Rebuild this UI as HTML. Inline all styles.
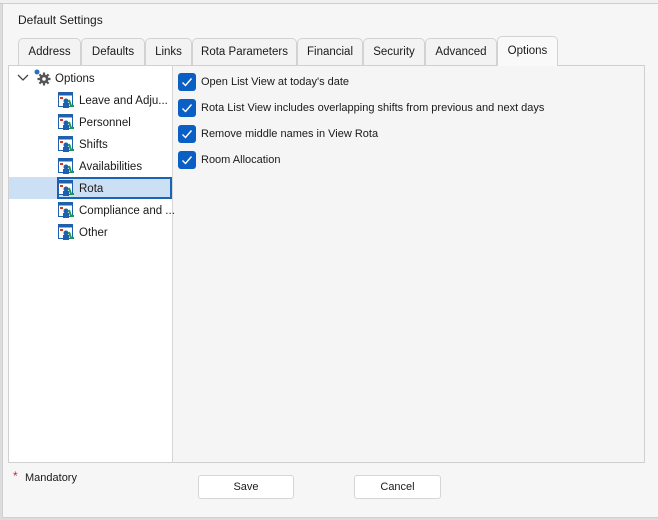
<!DOCTYPE html>
<html><head><meta charset="utf-8"><style>
*{box-sizing:border-box;margin:0;padding:0}
body{width:658px;height:520px;background:#dcdcdc;font-family:"Liberation Sans",sans-serif;font-size:11px;color:#1a1a1a;position:relative;overflow:hidden}
.topbar{position:absolute;left:0;top:0;width:658px;height:4px;background:#f0f0f0;border-bottom:1px solid #c8c8c8}
.dlg{position:absolute;left:2px;top:3px;width:660px;height:515px;background:#f6f6f6;border:1px solid #cfcfcf}
.title{position:absolute;left:18px;top:13px;font-size:12px}
.tab{position:absolute;top:38px;height:28px;border:1px solid #d2d2d2;border-bottom:none;border-radius:5px 5px 0 0;background:#f3f3f3;text-align:center;line-height:27px;font-size:11.5px}
.tab.sel{top:36px;height:30px;background:#f9f9f9;line-height:28px;z-index:2}
.panel{position:absolute;left:8px;top:65px;width:637px;height:398px;border:1px solid #d0d0d0;background:#f5f5f5}
.tree{position:absolute;left:9px;top:66px;width:164px;height:396px;background:#fff;border-right:1px solid #d6d6d6}
.item{position:absolute;left:79px;font-size:11.5px}
.ico{position:absolute;left:58px;width:16px;height:16px}
.sel2{position:absolute;left:9px;top:177px;width:163px;height:22px;background:#cce0f5}
.selb{position:absolute;left:57px;top:177px;width:115px;height:22px;border:2px solid #1a64b8}
.cb{position:absolute;left:178px;width:18px;height:18px;background:#0a5fc4;border-radius:3px}
.cl{position:absolute;left:201px;font-size:11px}
.btn{position:absolute;top:475px;height:24px;background:#fff;border:1px solid #d6d6d6;border-radius:3px;text-align:center;line-height:23px;font-size:11px}
</style></head><body>
<div class="topbar"></div>
<div class="dlg"></div>
<div class="title">Default Settings</div>
<div class="tab" style="left:18px;width:63px">Address</div>
<div class="tab" style="left:81px;width:64px">Defaults</div>
<div class="tab" style="left:145px;width:47px">Links</div>
<div class="tab" style="left:192px;width:105px">Rota Parameters</div>
<div class="tab" style="left:297px;width:66px">Financial</div>
<div class="tab" style="left:363px;width:62px">Security</div>
<div class="tab" style="left:425px;width:72px">Advanced</div>
<div class="tab sel" style="left:497px;width:61px">Options</div>
<div class="panel"></div>
<div class="tree"></div>
<div class="sel2"></div><div class="selb"></div>
<svg style="position:absolute;left:17px;top:74px" width="12" height="8"><path d="M1 1 L6 6 L11 1" fill="none" stroke="#444" stroke-width="1.3"/></svg>
<svg style="position:absolute;left:33px;top:68px" width="18" height="18"><circle cx="4" cy="4" r="2.5" fill="#2a6fc0"/><circle cx="11" cy="11" r="4.5" fill="#555"/><g stroke="#555" stroke-width="2.2"><path d="M11 4.5V17.5M4.5 11H17.5M6.4 6.4L15.6 15.6M15.6 6.4L6.4 15.6"/></g><circle cx="11" cy="11" r="1.8" fill="#fff"/></svg>
<div class="item" style="left:55px;top:73px">Options</div>
<svg width="0" height="0" style="position:absolute"><defs><g id="ic"><rect x="0.5" y="0.5" width="14" height="14" fill="#fff" stroke="#1f5fb0"/><rect x="0.5" y="0.5" width="14" height="3" fill="#1f5fb0"/><rect x="2" y="5" width="3" height="2" fill="#d32"/><circle cx="8" cy="9" r="2.5" fill="#1f5fb0"/><rect x="5" y="11" width="6" height="5" fill="#1f5fb0"/><path d="M11 8 L13 14 L16 14" stroke="#1a9a4a" stroke-width="2" fill="none"/></g></defs></svg>
<svg class="ico" style="top:92px"><use href="#ic"/></svg><div class="item" style="top:95px">Leave and Adju...</div>
<svg class="ico" style="top:114px"><use href="#ic"/></svg><div class="item" style="top:117px">Personnel</div>
<svg class="ico" style="top:136px"><use href="#ic"/></svg><div class="item" style="top:139px">Shifts</div>
<svg class="ico" style="top:158px"><use href="#ic"/></svg><div class="item" style="top:161px">Availabilities</div>
<svg class="ico" style="top:180px"><use href="#ic"/></svg><div class="item" style="top:183px">Rota</div>
<svg class="ico" style="top:202px"><use href="#ic"/></svg><div class="item" style="top:205px">Compliance and ...</div>
<svg class="ico" style="top:224px"><use href="#ic"/></svg><div class="item" style="top:227px">Other</div>
<svg width="0" height="0" style="position:absolute"><defs><path id="ck" d="M4.5 9.5 L7.5 12.5 L13.5 5.5" fill="none" stroke="#fff" stroke-width="1.4"/></defs></svg>
<svg class="cb" style="top:73px"><use href="#ck"/></svg><div class="cl" style="top:76px">Open List View at today's date</div>
<svg class="cb" style="top:99px"><use href="#ck"/></svg><div class="cl" style="top:102px">Rota List View includes overlapping shifts from previous and next days</div>
<svg class="cb" style="top:125px"><use href="#ck"/></svg><div class="cl" style="top:128px">Remove middle names in View Rota</div>
<svg class="cb" style="top:151px"><use href="#ck"/></svg><div class="cl" style="top:154px">Room Allocation</div>
<div style="position:absolute;left:13px;top:469px;color:#e02020;font-size:12px">*</div>
<div style="position:absolute;left:25px;top:472px">Mandatory</div>
<div class="btn" style="left:198px;width:96px">Save</div>
<div class="btn" style="left:354px;width:87px">Cancel</div>
</body></html>
